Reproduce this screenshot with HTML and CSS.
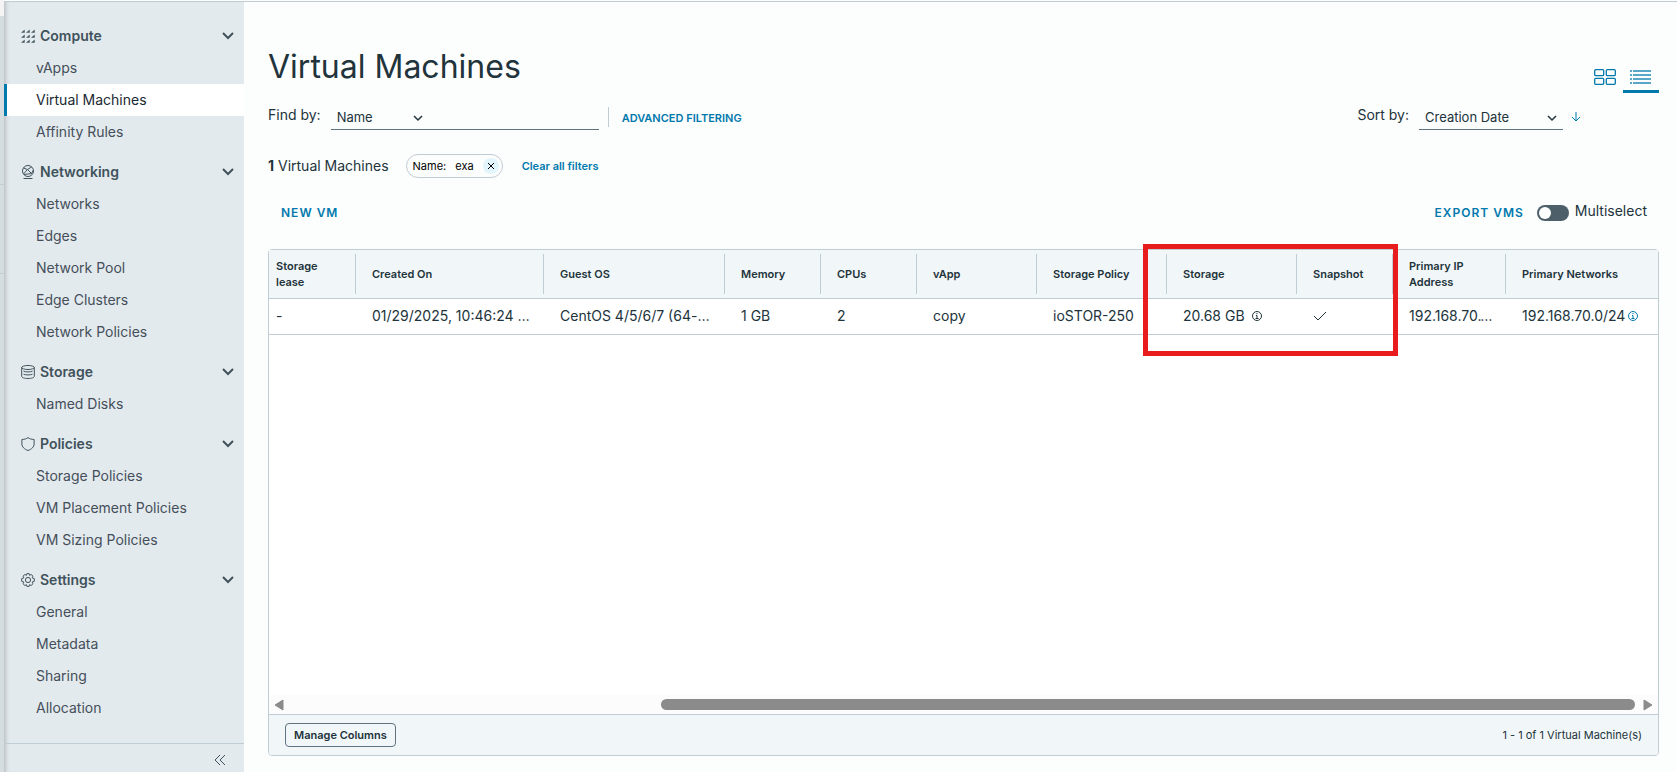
FILE: index.html
```
<!DOCTYPE html>
<html lang="en">
<head>
    <meta charset="UTF-8">
    <meta name="viewport" content="width=device-width, initial-scale=1.0">
    <title>Virtual Machines</title>
    <link rel="stylesheet" href="styles.css">
</head>
<body>
    <div class="rail"><span class="rail-top"></span><span class="rail-item"></span><span class="rail-item"></span></div>
    <div class="content">
        <aside class="sidebar">
            <nav class="nav">
                <section class="nav-group">
                    <button type="button" class="nav-head">
                        <svg class="icon" viewBox="0 0 14 14"><path d="M.5 3.500L3.500 1v2.500zM5.500 3.500l3-2.500v2.500zM10.500 3.500l3-2.500v2.500zM.5 8.500l3-2.500v2.500zM5.500 8.500l3-2.500v2.500zM10.500 8.500l3-2.500v2.500zM.5 13.500l3-2.500v2.500zM5.500 13.500l3-2.500v2.500zM10.500 13.500l3-2.500v2.500z" fill="currentColor" stroke-width=".4"/></svg>
                        <span>Compute</span>
                        <svg class="caret" viewBox="0 0 12 8"><path d="M1 1l5 5 5-5"/></svg>
                    </button>
                    <a href="#">vApps</a>
                    <a href="#" class="active">Virtual Machines</a>
                    <a href="#">Affinity Rules</a>
                </section>
                <section class="nav-group">
                    <button type="button" class="nav-head">
                        <svg class="icon" viewBox="0 0 14 14"><circle cx="7" cy="6" r="5.500"/><path d="M2.500 13.500h9M2.500 3l4 1.500 4-2.500M6.500 4.500l4 4M2.500 9l4-4.500M3 9.500l7.500-1 1.500-3"/></svg>
                        <span>Networking</span>
                        <svg class="caret" viewBox="0 0 12 8"><path d="M1 1l5 5 5-5"/></svg>
                    </button>
                    <a href="#">Networks</a>
                    <a href="#">Edges</a>
                    <a href="#">Network Pool</a>
                    <a href="#">Edge Clusters</a>
                    <a href="#">Network Policies</a>
                </section>
                <section class="nav-group">
                    <button type="button" class="nav-head">
                        <svg class="icon" viewBox="0 0 14 14"><ellipse cx="7" cy="2.500" rx="6.300" ry="2"/><path d="M.7 2.500v9c0 1.100 2.700 2 6.300 2s6.300-.9 6.300-2v-9M2.500 6.200c2.500 1 6.500 1 9 0M2.500 9.200c2.500 1 6.500 1 9 0"/></svg>
                        <span>Storage</span>
                        <svg class="caret" viewBox="0 0 12 8"><path d="M1 1l5 5 5-5"/></svg>
                    </button>
                    <a href="#">Named Disks</a>
                </section>
                <section class="nav-group">
                    <button type="button" class="nav-head">
                        <svg class="icon" viewBox="0 0 14 14"><path d="M7 .6C5.400 1.800 3.500 2.400 .9 2.500v4.500c0 3 2.600 5.300 6.100 6.500 3.500-1.200 6.100-3.500 6.100-6.500V2.500C10.500 2.400 8.600 1.800 7 .6z"/></svg>
                        <span>Policies</span>
                        <svg class="caret" viewBox="0 0 12 8"><path d="M1 1l5 5 5-5"/></svg>
                    </button>
                    <a href="#">Storage Policies</a>
                    <a href="#">VM Placement Policies</a>
                    <a href="#">VM Sizing Policies</a>
                </section>
                <section class="nav-group">
                    <button type="button" class="nav-head">
                        <svg class="icon" viewBox="0 0 14 14"><circle cx="7" cy="7" r="2.600"/><path d="M5.900.6h2.200l.5 1.700 1.500-.8 1.900 1.700-.9 1.600 2.200.8v2.700l-2.200.8.9 1.600-1.900 1.800-1.500-.8-.5 1.700H5.900l-.5-1.700-1.500.8L2 10.700l.9-1.600-2.200-.8V5.600l2.200-.8L2 3.200l1.900-1.700 1.500.8z"/></svg>
                        <span>Settings</span>
                        <svg class="caret" viewBox="0 0 12 8"><path d="M1 1l5 5 5-5"/></svg>
                    </button>
                    <a href="#">General</a>
                    <a href="#">Metadata</a>
                    <a href="#">Sharing</a>
                    <a href="#">Allocation</a>
                </section>
            </nav>
            <div class="sidebar-foot">
                <button type="button" class="icon-btn" aria-label="Collapse menu">
                    <svg class="collapse" viewBox="0 0 12 12"><path d="M6 1L1 6l5 5M11 1L6 6l5 5"/></svg>
                </button>
            </div>
        </aside>

        <main class="main">
            <header class="page-head">
                <h1>Virtual Machines</h1>
                <div class="view-switch">
                    <button type="button" aria-label="Card view">
                        <svg width="22" height="16" viewBox="0 0 22 16"><g stroke-width="1.300"><rect x=".7" y=".7" width="9" height="6" rx="1"/><rect x="12.300" y=".7" width="9" height="6" rx="1"/><rect x=".7" y="9.300" width="9" height="6" rx="1"/><rect x="12.300" y="9.300" width="9" height="6" rx="1"/></g></svg>
                    </button>
                    <button type="button" class="selected" aria-label="List view">
                        <svg width="22" height="16" viewBox="0 0 22 16"><path d="M0 2h2M3 2h18M0 6h2M3 6h18M0 10h2M3 10h18M0 14h2M3 14h18" stroke-width="2" stroke-opacity=".65"/></svg>
                    </button>
                </div>
            </header>

            <div class="filters">
                <label for="findBy">Find by:</label>
                <div class="find-box">
                    <div class="select find-select">
                        <select id="findBy"><option>Name</option></select>
                        <svg viewBox="0 0 12 8"><path d="M2 2l4 4 4-4"/></svg>
                    </div>
                    <input type="text" aria-label="Search value">
                </div>
                <a href="#" class="advanced">ADVANCED FILTERING</a>
                <div class="sort">
                    <label for="sortBy">Sort by:</label>
                    <div class="select sort-select">
                        <select id="sortBy"><option>Creation Date</option></select>
                        <svg viewBox="0 0 12 8"><path d="M2 2l4 4 4-4"/></svg>
                    </div>
                    <button type="button" class="icon-btn" aria-label="Sort descending">
                        <svg class="sort-arrow" viewBox="0 0 10 12"><path d="M5 1v9M1 6l4 4 4-4"/></svg>
                    </button>
                </div>
            </div>

            <div class="applied">
                <span class="count"><b>1</b> Virtual Machines</span>
                <span class="chip">Name:<span>exa</span>
                    <button type="button" aria-label="Remove filter"><svg viewBox="0 0 8 8"><path d="M1 1l6 6M7 1L1 7"/></svg></button>
                </span>
                <a href="#">Clear all filters</a>
            </div>

            <div class="actions">
                <button type="button" class="link-btn">NEW VM</button>
                <div class="actions-right">
                    <button type="button" class="link-btn">EXPORT VMS</button>
                    <input type="checkbox" class="toggle" id="multi">
                    <label for="multi">Multiselect</label>
                </div>
            </div>

            <div class="datagrid">
                <table>
                    <colgroup>
                        <col class="w-lease"><col class="w-created"><col class="w-guest"><col class="w-small"><col class="w-small"><col class="w-vapp">
                        <col class="w-storage"><col class="w-storage"><col class="w-small"><col class="w-ip"><col>
                    </colgroup>
                    <thead>
                        <tr>
                            <th><div>Storage lease</div></th>
                            <th><div>Created On</div></th>
                            <th><div>Guest OS</div></th>
                            <th><div>Memory</div></th>
                            <th><div>CPUs</div></th>
                            <th><div>vApp</div></th>
                            <th><div>Storage Policy</div></th>
                            <th class="marked"><div>Storage</div><span class="highlight"></span></th>
                            <th><div>Snapshot</div></th>
                            <th><div>Primary IP Address</div></th>
                            <th><div>Primary Networks</div></th>
                        </tr>
                    </thead>
                    <tbody>
                        <tr>
                            <td>-</td>
                            <td>01/29/2025, 10:46:24 AM</td>
                            <td>CentOS 4/5/6/7 (64-bit)</td>
                            <td>1 GB</td>
                            <td>2</td>
                            <td>copy</td>
                            <td>ioSTOR-250</td>
                            <td>20.68 GB <svg class="info" viewBox="0 0 10 10"><circle cx="5" cy="5" r="4.500"/><path d="M5 2v1.200M4 4.500h1v3M3.500 7.500h3"/></svg></td>
                            <td><svg class="check" viewBox="0 0 14 10"><path d="M1 5l4 4 8-8"/></svg></td>
                            <td>192.168.70.101</td>
                            <td class="networks">192.168.70.0/24<svg class="info blue" viewBox="0 0 10 10"><circle cx="5" cy="5" r="4.500"/><path d="M5 2v1.200M4 4.500h1v3M3.500 7.500h3"/></svg></td>
                        </tr>
                    </tbody>
                </table>
                <div class="scrollbar">
                    <svg viewBox="0 0 10 12"><path d="M9 1v10L1 6z"/></svg>
                    <div class="track"><div class="thumb"></div></div>
                    <svg viewBox="0 0 10 12"><path d="M1 1v10l8-5z"/></svg>
                </div>
                <footer class="grid-foot">
                    <button type="button">Manage Columns</button>
                    <span>1 - 1 of 1 Virtual Machine(s)</span>
                </footer>
            </div>
        </main>
    </div>
</body>
</html>
```
FILE: styles.css
```
* {
    box-sizing: border-box;
}
body {
    margin: 0;
    min-height: 100vh;
    display: flex;
    background-color: #fcfdfd;
    color: #21333b;
    font-family: Inter, "Liberation Sans", sans-serif;
    font-size: 14px;
    line-height: 24px;
}
button, input, select {
    margin: 0;
    padding: 0;
    border: none;
    background: none;
    color: inherit;
    font: inherit;
}
button {
    cursor: pointer;
}
a {
    color: #0079ad;
    text-decoration: none;
}
svg {
    fill: none;
    stroke: currentColor;
    flex: none;
}

/* app rail at the far left */
.rail {
    width: 4px;
    background-color: #d5dde0;
}
.rail span {
    display: block;
}
.rail-top {
    height: 16px;
    background-color: #f4f4f4;
}
.rail-item {
    height: 169px;
    border-bottom: 1px solid #c1cdd4;
}
.rail-item + .rail-item {
    height: 89px;
}
.content {
    flex: 1;
    min-width: 0;
    display: flex;
    margin-top: 1px;
    border-top: 1px solid #c1cdd4;
}

/* sidebar */
.sidebar {
    width: 240px;
    flex: none;
    display: flex;
    flex-direction: column;
    background-color: #e3eaed;
    box-shadow: inset 5px 0 5px -4px rgba(0, 0, 0, 0.25);
    color: #40525b;
}
.nav {
    flex: 1;
    padding-top: 18px;
}
.nav-group {
    margin-bottom: 8px;
}
.nav-head {
    display: flex;
    align-items: center;
    width: 100%;
    height: 32px;
    padding: 0 10px 0 17px;
    font-weight: 600;
    text-align: left;
}
.nav-head span {
    flex: 1;
    padding-left: 5px;
}
.icon {
    width: 14px;
    height: 14px;
}
.caret {
    width: 12px;
    height: 8px;
    stroke-width: 2;
}
.nav a {
    display: block;
    height: 32px;
    padding-left: 32px;
    line-height: 32px;
    color: #454f5b;
}
.nav .active {
    padding-left: 29px;
    border-left: 3px solid #0079ad;
    background-color: #fff;
    color: #1b2a32;
}
.sidebar-foot {
    display: flex;
    justify-content: flex-end;
    align-items: center;
    height: 29px;
    padding: 4px 18px 0 0;
    border-top: 1px solid #c1cdd4;
}
.icon-btn {
    display: flex;
}
.collapse {
    width: 12px;
    height: 12px;
}

/* page header and filters */
.main {
    flex: 1;
    min-width: 0;
    display: flex;
    flex-direction: column;
    padding: 47px 18px 16px 24px;
}
.page-head {
    display: flex;
    justify-content: space-between;
    align-items: flex-end;
}
h1 {
    margin: 0 0 8px;
    font-size: 32px;
    font-weight: 400;
    line-height: 36px;
}
.view-switch {
    display: flex;
    color: #0079ad;
}
.view-switch button {
    display: flex;
    justify-content: center;
    width: 36px;
    height: 30px;
    padding-top: 6px;
}
.view-switch .selected {
    border-bottom: 3px solid #0079ad;
}
.filters {
    display: flex;
    align-items: center;
    margin-top: 10px;
}
.filters label {
    padding-bottom: 4px;
}
.find-box {
    display: flex;
    width: 268px;
    margin: 0 9px 0 10px;
    border-bottom: 1px solid #5f7480;
}
.find-box input {
    flex: 1;
    min-width: 0;
    outline: none;
}
.select {
    position: relative;
    font-size: 13px;
}
.select select {
    width: 100%;
    height: 24px;
    padding-left: 6px;
    appearance: none;
}
.select svg {
    position: absolute;
    top: 9px;
    right: 5px;
    width: 12px;
    height: 8px;
    stroke-width: 1.5;
    pointer-events: none;
}
.find-select {
    width: 98px;
}
.advanced {
    height: 20px;
    padding-left: 13px;
    border-left: 1px solid #c1cdd4;
    font-size: 11px;
    font-weight: 600;
    line-height: 22px;
}
.sort {
    display: flex;
    align-items: center;
    margin-left: auto;
    padding-right: 78px;
}
.sort-select {
    width: 144px;
    margin: 0 8px 0 10px;
    border-bottom: 1px solid #5f7480;
}
.sort-arrow {
    width: 10px;
    height: 12px;
    color: #0079ad;
}
.applied {
    display: flex;
    align-items: center;
    margin-top: 23px;
}
.applied a {
    font-size: 11px;
    font-weight: 600;
}
.chip {
    display: flex;
    align-items: center;
    height: 24px;
    margin: 0 19px 0 17px;
    padding: 0 3px 0 6px;
    border: 1px solid #c1cdd4;
    border-radius: 12px;
    color: #000;
    font-size: 11px;
}
.chip span {
    padding: 0 9px;
}
.chip button {
    display: flex;
    align-items: center;
    justify-content: center;
    width: 16px;
    height: 16px;
    border-radius: 50%;
    background-color: #e3f5fc;
}
.chip svg {
    width: 8px;
    height: 8px;
}

/* actions above the grid */
.actions {
    display: flex;
    justify-content: space-between;
    margin: 23px 12px 24px 13px;
}
.actions-right {
    display: flex;
    align-items: center;
}
.actions label {
    padding-bottom: 4px;
    line-height: 20px;
}
.link-btn {
    color: #0079ad;
    font-size: 12px;
    font-weight: 600;
    letter-spacing: 1px;
}
.toggle {
    appearance: none;
    width: 32px;
    height: 16px;
    margin: 0 6px 0 13px;
    padding: 2px;
    border-radius: 8px;
    background-color: #4d5f69;
}
.toggle::before {
    content: "";
    display: block;
    width: 12px;
    height: 12px;
    border-radius: 50%;
    background-color: #fff;
}
.toggle:checked::before {
    margin-left: auto;
}

/* datagrid */
.datagrid {
    flex: 1;
    display: flex;
    flex-direction: column;
    border: 1px solid #c1cdd4;
    border-radius: 4px;
    background-color: #fff;
}
table {
    width: 100%;
    table-layout: fixed;
    border-spacing: 0;
}
.w-lease {
    width: 86px;
}
.w-created {
    width: 188px;
}
.w-guest {
    width: 181px;
}
.w-small {
    width: 96px;
}
.w-vapp {
    width: 120px;
}
.w-storage {
    width: 130px;
}
.w-ip {
    width: 113px;
}
th {
    height: 49px;
    padding: 0;
    border-bottom: 1px solid #c1cdd4;
    background-color: #f1f6f8;
    font-size: 11px;
    font-weight: 600;
    line-height: 16px;
    text-align: left;
}
th div {
    display: flex;
    align-items: center;
    height: 40px;
    padding: 0 16px;
    border-left: 1px solid #c1cdd4;
}
th:first-child div {
    padding-left: 7px;
    border-left: none;
}
th:nth-child(10) div,
th:nth-child(7) div {
    padding-right: 8px;
}
td {
    height: 36px;
    padding: 0 12px 2px 17px;
    border-bottom: 1px solid #c1cdd4;
    white-space: nowrap;
    overflow: hidden;
    text-overflow: ellipsis;
}
td:first-child {
    padding-left: 7px;
}
.networks {
    padding-right: 0;
}
.info {
    width: 10px;
    height: 10px;
    margin-left: 3px;
}
.blue {
    color: #0079ad;
}
.check {
    width: 14px;
    height: 10px;
}
.marked {
    position: relative;
}
.highlight {
    position: absolute;
    top: -6px;
    left: -23px;
    width: 255px;
    height: 112px;
    border: 5px solid #e81c1c;
    pointer-events: none;
    z-index: 1;
}
.scrollbar {
    display: flex;
    align-items: center;
    gap: 6px;
    height: 19px;
    margin-top: auto;
    padding: 0 5px;
    background-color: #fcfcfc;
}
.scrollbar svg {
    width: 10px;
    height: 12px;
    fill: #8b8b8b;
    stroke: #8b8b8b;
}
.track {
    flex: 1;
    padding-right: 2px;
}
.thumb {
    width: calc(72% + 6px);
    height: 11px;
    margin-left: auto;
    border-radius: 6px;
    background-color: #8b8b8b;
}
.grid-foot {
    display: flex;
    align-items: center;
    justify-content: space-between;
    height: 41px;
    padding: 0 16px;
    border-top: 1px solid #c1cdd4;
    border-radius: 0 0 3px 3px;
    background-color: #f1f6f8;
    font-size: 11px;
}
.grid-foot button {
    height: 24px;
    padding: 0 8px;
    border: 1px solid #5f7480;
    border-radius: 4px;
    font-weight: 600;
    line-height: 20px;
}
```
